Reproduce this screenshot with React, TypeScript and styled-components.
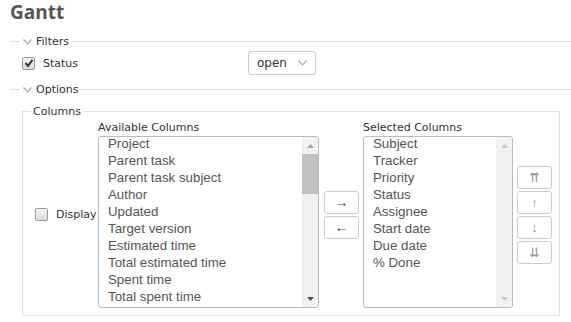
import React from "react"
import styled, { createGlobalStyle } from "styled-components"

const GlobalStyle = createGlobalStyle`
  body {
    margin: 0;
    background: #fff;
    font-family: "DejaVu Sans", Verdana, sans-serif;
    font-size: 11px;
    color: #333;
  }
`

const availableColumns = [
  "Project",
  "Parent task",
  "Parent task subject",
  "Author",
  "Updated",
  "Target version",
  "Estimated time",
  "Total estimated time",
  "Spent time",
  "Total spent time",
]

const selectedColumns = [
  "Subject",
  "Tracker",
  "Priority",
  "Status",
  "Assignee",
  "Start date",
  "Due date",
  "% Done",
]

// small grey chevron used in the collapsible legends and the select
const Chevron = () => (
  <svg width="9" height="6" viewBox="0 0 9 6">
    <polyline points="0.5,0.5 4.5,4.8 8.5,0.5" fill="none" stroke="#aaa" strokeWidth="1.2" />
  </svg>
)

const Check = ({ checked }: { checked?: boolean }) => (
  <CheckBox>
    {checked && (
      <svg width="10" height="10" viewBox="0 0 10 10">
        <polyline points="1.5,5 4,7.8 8.5,1.8" fill="none" stroke="#333" strokeWidth="2" />
      </svg>
    )}
  </CheckBox>
)

const ListBox = ({ items, thumb, width }: { items: string[]; thumb?: boolean; width: number }) => (
  <Box width={width}>
    <Items>
      {items.map(i => (
        <Item key={i}>{i}</Item>
      ))}
    </Items>
    <Scrollbar>
      <ScrollArrow>
        <svg width="7" height="4" viewBox="0 0 7 4">
          <polygon points="0,4 7,4 3.5,0" fill={thumb ? "#a3a3a3" : "#c8c8c8"} />
        </svg>
      </ScrollArrow>
      <Track>{thumb && <Thumb />}</Track>
      <ScrollArrow>
        <svg width="7" height="4" viewBox="0 0 7 4">
          <polygon points="0,0 7,0 3.5,4" fill={thumb ? "#505050" : "#c8c8c8"} />
        </svg>
      </ScrollArrow>
    </Scrollbar>
  </Box>
)

const App = () => {
  return (
    <Page>
      <GlobalStyle />
      <Title>Gantt</Title>

      <Collapsible>
        <Legend>
          <Chevron />
          Filters
        </Legend>
        <FilterRow>
          <FilterLabel>
            <Check checked />
            Status
          </FilterLabel>
          <Select>
            open
            <Chevron />
          </Select>
        </FilterRow>
      </Collapsible>

      <Collapsible>
        <Legend>
          <Chevron />
          Options
        </Legend>
        <ColumnsBox>
          <SmallLegend>Columns</SmallLegend>
          <ColumnsRow>
            <DisplayLabel>
              <Check />
              Display
            </DisplayLabel>
            <ListColumn>
              <ListTitle>Available Columns</ListTitle>
              <ListBox items={availableColumns} thumb width={221} />
            </ListColumn>
            <ButtonStack>
              <Btn>&#8594;</Btn>
              <Btn>&#8592;</Btn>
            </ButtonStack>
            <ListColumn>
              <ListTitle>Selected Columns</ListTitle>
              <ListBox items={selectedColumns} width={150} />
            </ListColumn>
            <ButtonStack last>
              <Btn small>&#8648;</Btn>
              <Btn small>&#8593;</Btn>
              <Btn small>&#8595;</Btn>
              <Btn small>&#8650;</Btn>
            </ButtonStack>
          </ColumnsRow>
        </ColumnsBox>
      </Collapsible>
    </Page>
  )
}

const Page = styled.div`
  padding-left: 10px;
`

const Title = styled.h2`
  margin: 0;
  height: 35px;
  font-family: "Open Sans", sans-serif;
  font-weight: 700;
  font-size: 19px;
  line-height: 24px;
  color: #555;
`

const Collapsible = styled.fieldset`
  margin: 0 0 5px 0;
  padding: 0 0 0 10px;
  min-width: 0;
  border: 0;
  border-top: 1px solid #e0e0e0;
`

const Legend = styled.legend`
  display: flex;
  align-items: center;
  gap: 4px;
  padding: 0 3px;
  height: 13px;
  line-height: 13px;
  color: #333;
  svg {
    margin-top: 1px;
  }
`

const FilterRow = styled.div`
  display: flex;
  align-items: center;
  height: 30px;
  padding-left: 2px;
`

const FilterLabel = styled.div`
  display: flex;
  align-items: center;
  gap: 8px;
  width: 226px;
`

const CheckBox = styled.span`
  display: inline-flex;
  flex: none;
  align-items: center;
  justify-content: center;
  width: 11px;
  height: 11px;
  border: 1px solid #999;
  border-radius: 2px;
  background: linear-gradient(#f4f4f4, #dcdcdc);
`

const Select = styled.div`
  display: flex;
  align-items: center;
  justify-content: space-between;
  box-sizing: border-box;
  width: 68px;
  height: 24px;
  padding: 0 8px;
  border: 1px solid #ccc;
  border-radius: 3px;
  font-size: 12px;
`

const ColumnsBox = styled.fieldset`
  box-sizing: border-box;
  width: 538px;
  margin: 9px 0 0 2px;
  padding: 3px 0 7px 8px;
  min-width: 0;
  border: 1px solid #e0e0e0;
`

const SmallLegend = styled.legend`
  padding: 0 2px;
  line-height: 13px;
`

const ColumnsRow = styled.div`
  display: flex;
  align-items: center;
  padding-left: 4px;
`

const DisplayLabel = styled.div`
  display: flex;
  align-items: center;
  gap: 8px;
  width: 63px;
  white-space: nowrap;
`

const ListColumn = styled.div`
  display: flex;
  flex-direction: column;
`

const ListTitle = styled.div`
  line-height: 14px;
  height: 15px;
`

const Box = styled.div<{ width: number }>`
  display: flex;
  box-sizing: border-box;
  width: ${p => p.width}px;
  height: 172px;
  border: 1px solid #bbb;
  border-radius: 3px;
  overflow: hidden;
`

const Items = styled.div`
  flex: 1;
  margin-top: -2px;
  padding-left: 9px;
`

const Item = styled.div`
  font-family: "Liberation Sans", Arial, sans-serif;
  font-size: 13.3px;
  line-height: 17px;
  color: #555;
  white-space: nowrap;
`

const Scrollbar = styled.div`
  display: flex;
  flex-direction: column;
  width: 16px;
  background: #f1f1f1;
`

const ScrollArrow = styled.div`
  display: flex;
  align-items: center;
  justify-content: center;
  height: 17px;
`

const Track = styled.div`
  flex: 1;
`

const Thumb = styled.div`
  height: 40px;
  background: #c1c1c1;
`

const ButtonStack = styled.div<{ last?: boolean }>`
  display: flex;
  flex-direction: column;
  gap: 2px;
  margin: ${p => (p.last ? "0 0 0 4px" : "0 4px 0 5px")};
`

const Btn = styled.div<{ small?: boolean }>`
  display: flex;
  align-items: center;
  justify-content: center;
  box-sizing: border-box;
  width: 35px;
  height: 23px;
  border: 1px solid #ccc;
  border-radius: 3px;
  background: #fff;
  font-family: "Liberation Sans", Arial, sans-serif;
  font-size: ${p => (p.small ? 13 : 14)}px;
  color: ${p => (p.small ? "#a08c8c" : "#444")};
`

export default App
